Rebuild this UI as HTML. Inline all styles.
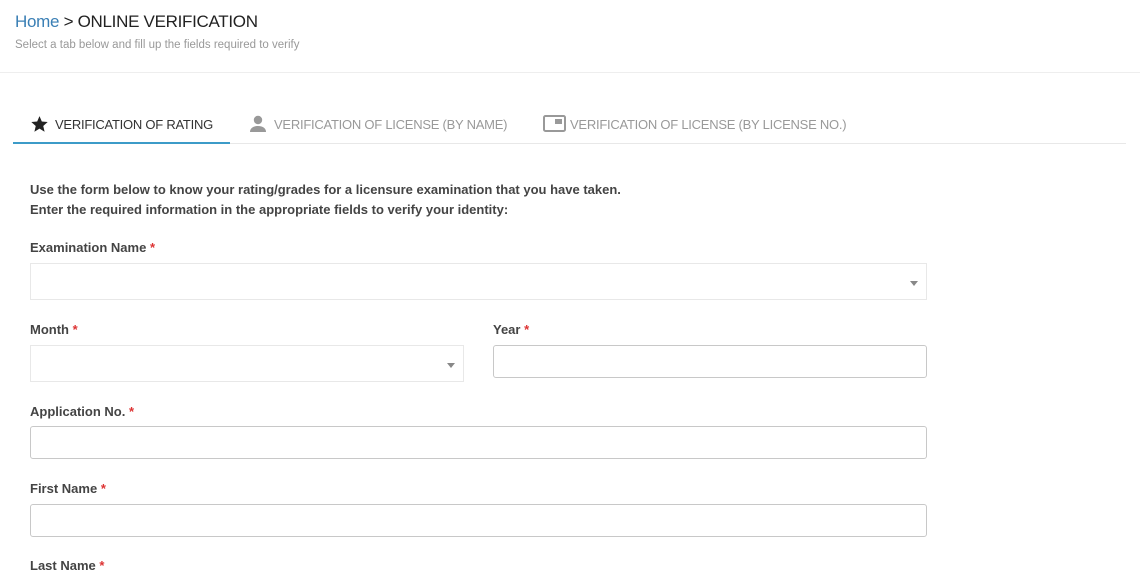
<!DOCTYPE html>
<html><head><meta charset="utf-8"><style>
*{box-sizing:border-box;margin:0;padding:0}
body{width:1140px;height:569px;overflow:hidden;background:#fff;font-family:"Liberation Sans",sans-serif;position:relative}
.a{position:absolute;white-space:nowrap}
.lbl{font-size:13px;font-weight:bold;color:#444}
.lbl span{color:#d33}
.sel{position:absolute;border:1px solid #e8e8e8;background:#fff}
.sel:after{content:"";position:absolute;right:8px;top:50%;margin-top:-1px;border-left:4px solid transparent;border-right:4px solid transparent;border-top:5px solid #888}
.inp{position:absolute;border:1px solid #c8c8c8;border-radius:3px;background:#fff}
.tab{font-size:13px;letter-spacing:-0.25px;color:#999;top:117px}
</style></head><body>
<div class="a" style="left:15px;top:12px;font-size:17px;letter-spacing:-0.3px;color:#222"><span style="color:#3a7fb5">Home</span> &gt; ONLINE VERIFICATION</div>
<div class="a" style="left:15px;top:39px;font-size:11.5px;color:#999">Select a tab below and fill up the fields required to verify</div>
<div class="a" style="left:0;top:72px;width:1140px;height:1px;background:#eee"></div>

<svg class="a" style="left:30px;top:115px" width="19" height="18" viewBox="0 0 24 24"><path fill="#222" d="M12 1.5l3.1 7.2 7.8.7-5.9 5.2 1.8 7.7L12 18.2l-6.8 4.1L7 14.6 1.1 9.4l7.8-.7z"/></svg>
<div class="a tab" style="left:55px;color:#333">VERIFICATION OF RATING</div>
<svg class="a" style="left:248px;top:114px" width="20" height="20" viewBox="0 0 20 20"><circle cx="10" cy="6" r="4.2" fill="#999"/><path fill="#999" d="M2 18c0-4 3.6-6 8-6s8 2 8 6z"/></svg>
<div class="a tab" style="left:274px">VERIFICATION OF LICENSE (BY NAME)</div>
<svg class="a" style="left:543px;top:115px" width="23" height="18" viewBox="0 0 23 18"><rect x="1" y="1" width="21" height="15" rx="1.5" fill="none" stroke="#999" stroke-width="2"/><rect x="12" y="4" width="7" height="5" fill="#999"/></svg>
<div class="a tab" style="left:570px">VERIFICATION OF LICENSE (BY LICENSE NO.)</div>
<div class="a" style="left:13px;top:143px;width:1113px;height:1px;background:#e8e8e8"></div>
<div class="a" style="left:13px;top:142px;width:217px;height:2px;background:#3c9bc8"></div>

<div class="a lbl" style="left:30px;top:180px;line-height:20px">Use the form below to know your rating/grades for a licensure examination that you have taken.<br>Enter the required information in the appropriate fields to verify your identity:</div>
<div class="a lbl" style="left:30px;top:240px">Examination Name <span>*</span></div>
<div class="sel" style="left:30px;top:263px;width:897px;height:37px"></div>
<div class="a lbl" style="left:30px;top:322px">Month <span>*</span></div>
<div class="sel" style="left:30px;top:345px;width:434px;height:37px"></div>
<div class="a lbl" style="left:493px;top:322px">Year <span>*</span></div>
<div class="inp" style="left:493px;top:345px;width:434px;height:33px"></div>
<div class="a lbl" style="left:30px;top:404px">Application No. <span>*</span></div>
<div class="inp" style="left:30px;top:426px;width:897px;height:33px"></div>
<div class="a lbl" style="left:30px;top:481px">First Name <span>*</span></div>
<div class="inp" style="left:30px;top:504px;width:897px;height:33px"></div>
<div class="a lbl" style="left:30px;top:558px">Last Name <span>*</span></div>
</body></html>
